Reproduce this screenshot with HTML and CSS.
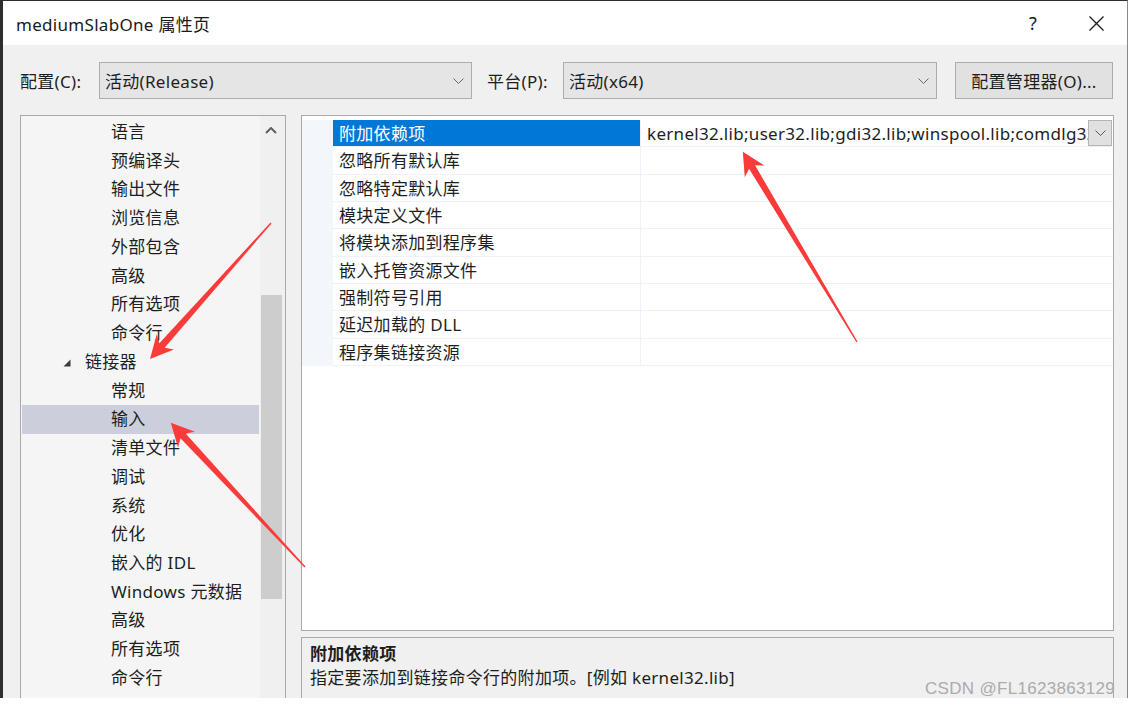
FILE: index.html
```html
<!DOCTYPE html>
<html lang="zh-CN">
<head>
<meta charset="utf-8">
<title>mediumSlabOne 属性页</title>
<link rel="stylesheet" href="styles.css">
</head>
<body>
<div class="page">
  <div class="window">
    <div class="titlebar">
      <span class="title">mediumSlabOne 属性页</span>
      <span class="tb-btn help">?</span>
      <span class="tb-btn close">
        <svg width="15" height="15" viewBox="0 0 15 15"><path d="M0.5 0.5 L14.5 14.5 M14.5 0.5 L0.5 14.5" stroke="#1a1a1a" stroke-width="1.3" fill="none"/></svg>
      </span>
    </div>
    <div class="body">
      <div class="toolbar">
        <span class="label label-cfg">配置(C):</span>
        <div class="combo combo-cfg">
          <span class="combo-text">活动(Release)</span>
          <svg class="chev" width="11" height="6" viewBox="0 0 11 6"><path d="M0.5 0.5 L5.5 5.5 L10.5 0.5" fill="none" stroke="#666" stroke-width="1"/></svg>
        </div>
        <span class="label label-plat">平台(P):</span>
        <div class="combo combo-plat">
          <span class="combo-text">活动(x64)</span>
          <svg class="chev" width="11" height="6" viewBox="0 0 11 6"><path d="M0.5 0.5 L5.5 5.5 L10.5 0.5" fill="none" stroke="#666" stroke-width="1"/></svg>
        </div>
        <div class="btn">配置管理器(O)...</div>
      </div>
      <div class="main">
        <div class="tree">
          <div class="tree-list">
            <div class="node l2">语言</div>
            <div class="node l2">预编译头</div>
            <div class="node l2">输出文件</div>
            <div class="node l2">浏览信息</div>
            <div class="node l2">外部包含</div>
            <div class="node l2">高级</div>
            <div class="node l2">所有选项</div>
            <div class="node l2">命令行</div>
            <div class="node l1"><svg class="expander" width="8" height="8" viewBox="0 0 8 8"><polygon points="7.5,0.5 7.5,7.5 0.5,7.5" fill="#3a3a3a"/></svg>链接器</div>
            <div class="node l2">常规</div>
            <div class="node l2 selected">输入</div>
            <div class="node l2">清单文件</div>
            <div class="node l2">调试</div>
            <div class="node l2">系统</div>
            <div class="node l2">优化</div>
            <div class="node l2">嵌入的 IDL</div>
            <div class="node l2">Windows 元数据</div>
            <div class="node l2">高级</div>
            <div class="node l2">所有选项</div>
            <div class="node l2">命令行</div>
            <div class="node l1"><svg class="expander" width="8" height="8" viewBox="0 0 8 8"><polygon points="1,0.5 6,4 1,7.5" fill="none" stroke="#3a3a3a"/></svg>清单工具</div>
          </div>
          <div class="vscroll">
            <div class="sb-up">
              <svg width="12" height="7" viewBox="0 0 12 7"><path d="M1 6 L6 1 L11 6" fill="none" stroke="#606060" stroke-width="2"/></svg>
            </div>
            <div class="sb-track"><div class="sb-thumb"></div></div>
          </div>
        </div>
        <div class="right">
          <div class="grid">
            <div class="prop">
              <div class="margin"></div>
              <div class="name selected">附加依赖项</div>
              <div class="value">
                <span class="val-text">kernel32.lib;user32.lib;gdi32.lib;winspool.lib;comdlg32.lib;advapi32.lib;shell32.lib;ole32.lib</span>
                <span class="dd"><svg width="11" height="6" viewBox="0 0 11 6"><path d="M0.5 0.5 L5.5 5.5 L10.5 0.5" fill="none" stroke="#555" stroke-width="1"/></svg></span>
              </div>
            </div>
            <div class="prop"><div class="margin"></div><div class="name">忽略所有默认库</div><div class="value"></div></div>
            <div class="prop"><div class="margin"></div><div class="name">忽略特定默认库</div><div class="value"></div></div>
            <div class="prop"><div class="margin"></div><div class="name">模块定义文件</div><div class="value"></div></div>
            <div class="prop"><div class="margin"></div><div class="name">将模块添加到程序集</div><div class="value"></div></div>
            <div class="prop"><div class="margin"></div><div class="name">嵌入托管资源文件</div><div class="value"></div></div>
            <div class="prop"><div class="margin"></div><div class="name">强制符号引用</div><div class="value"></div></div>
            <div class="prop"><div class="margin"></div><div class="name">延迟加载的 DLL</div><div class="value"></div></div>
            <div class="prop"><div class="margin"></div><div class="name">程序集链接资源</div><div class="value"></div></div>
          </div>
          <div class="desc">
            <div class="desc-title">附加依赖项</div>
            <div class="desc-text">指定要添加到链接命令行的附加项。[例如 kernel32.lib]</div>
          </div>
        </div>
      </div>
    </div>
  </div>
  <svg class="arrows" width="1131" height="705" viewBox="0 0 1131 705">
    <g fill="#fb3a3a">
      <polygon transform="translate(271 223) rotate(131.66)" points="0,-0.7 164,-3.5 159,-11.5 182,0 159,11.5 164,3.5 0,0.7"/>
      <polygon transform="translate(305 567) rotate(-132.94)" points="0,-0.7 179,-3.5 174,-11.5 197,0 174,11.5 179,3.5 0,0.7"/>
      <polygon transform="translate(857 342) rotate(-120.96)" points="0,-0.7 204,-3.5 199,-11.5 222,0 199,11.5 204,3.5 0,0.7"/>
    </g>
  </svg>
  <div class="watermark">CSDN @FL1623863129</div>
</div>
</body>
</html>
```
FILE: styles.css
```css
* { box-sizing: border-box; }

html, body {
  margin: 0;
  padding: 0;
  background: #ffffff;
}

body {
  font-family: "Noto Sans", "Noto Sans CJK SC", sans-serif;
  font-size: 17px;
  letter-spacing: 0.3px;
  color: #1e1e1e;
}

.page {
  position: relative;
  width: 1131px;
  height: 705px;
  overflow: hidden;
}

.window {
  width: 1128px;
  height: 698px;
  border-left: 3px solid #2e2e2e;
  border-top: 1px solid #2e2e2e;
  border-right: 1px solid #8a8a8a;
  display: flex;
  flex-direction: column;
  overflow: hidden;
}

/* title bar */
.titlebar {
  flex: none;
  height: 44px;
  background: #ffffff;
  display: flex;
  align-items: center;
  padding-left: 13px;
}

.title {
  flex: 1;
  color: #1a1a1a;
}

.tb-btn {
  height: 44px;
  display: flex;
  align-items: center;
  justify-content: center;
}

.help {
  width: 64px;
  font-size: 18px;
  color: #1a1a1a;
}

.close {
  width: 62px;
}

/* body */
.body {
  flex: 1;
  min-height: 0;
  background: #f0f0f0;
  padding: 17px 13px 0 17px;
  display: flex;
  flex-direction: column;
}

.toolbar {
  flex: none;
  height: 37px;
  display: flex;
  align-items: stretch;
}

.label {
  display: flex;
  align-items: center;
  white-space: nowrap;
}

.label-cfg { width: 79px; }
.label-plat { width: 76px; margin-left: 15px; }

.combo {
  display: flex;
  align-items: center;
  background: #e5e5e5;
  border: 1px solid #adadad;
  padding: 0 7px 0 5px;
}

.combo-cfg { width: 373px; }
.combo-plat { width: 374px; }

.combo-text { flex: 1; }

.chev { flex: none; }

.btn {
  width: 158px;
  margin-left: 18px;
  background: #e1e1e1;
  border: 1px solid #adadad;
  display: flex;
  align-items: center;
  justify-content: center;
  white-space: nowrap;
}

.main {
  flex: 1;
  min-height: 0;
  margin-top: 16px;
  display: flex;
  gap: 15px;
}

/* tree */
.tree {
  width: 266px;
  flex: none;
  border: 1px solid #a9a9a9;
  background: #f5f5f5;
  display: flex;
  overflow: hidden;
  height: 600px;
}

.tree-list {
  width: 239px;
  flex: none;
  padding-top: 2px;
}

.node {
  height: 28.74px;
  line-height: 28.74px;
  white-space: nowrap;
  margin: 0 1px;
  display: flex;
  align-items: center;
}

.l2 { padding-left: 89px; }
.l1 { padding-left: 41px; }

.expander {
  margin-right: 14px;
  margin-top: 2px;
}

.node.selected {
  background: #cccedb;
}

.vscroll {
  width: 25px;
  flex: none;
  background: #f0f0f0;
  display: flex;
  flex-direction: column;
}

.sb-up {
  height: 28px;
  display: flex;
  align-items: center;
  justify-content: center;
  padding-right: 3px;
}

.sb-track {
  flex: 1;
  padding-top: 151px;
}

.sb-thumb {
  width: 21px;
  margin-left: 1px;
  height: 304px;
  background: #cdcdcd;
}

/* right side */
.right {
  width: 813px;
  flex: none;
  display: flex;
  flex-direction: column;
  gap: 6px;
}

.grid {
  flex: none;
  height: 516px;
  border: 1px solid #a9a9a9;
  background: #ffffff;
  padding-top: 4px;
}

.prop {
  display: flex;
  height: 27.33px;
}

.margin {
  width: 31px;
  flex: none;
  background: #f3f6fb;
}

.name {
  width: 308px;
  flex: none;
  padding-left: 6px;
  border-right: 1px solid #eef1f8;
  border-bottom: 1px solid #eef1f8;
  line-height: 28px;
  white-space: nowrap;
}

.name.selected {
  background: #0078d7;
  color: #ffffff;
}

.value {
  flex: 1;
  min-width: 0;
  display: flex;
  border-bottom: 1px solid #eef1f8;
  line-height: 28px;
}

.val-text {
  flex: 1;
  min-width: 0;
  overflow: hidden;
  white-space: nowrap;
  padding-left: 6px;
}

.dd {
  flex: none;
  width: 24px;
  margin-right: 1px;
  background: #e1e1e1;
  border: 1px solid #b4b4b4;
  display: flex;
  align-items: center;
  justify-content: center;
}

.desc {
  flex: 1;
  border: 1px solid #a9a9a9;
  border-bottom: none;
  background: #f0f0f0;
  padding: 4px 8px 0 8px;
  line-height: 24px;
}

.desc-title {
  font-weight: bold;
}

/* overlays */
.arrows {
  position: absolute;
  left: 0;
  top: 0;
  pointer-events: none;
}

.watermark {
  position: absolute;
  left: 925px;
  top: 679px;
  font-family: "Liberation Sans", sans-serif;
  font-size: 17px;
  line-height: 20px;
  color: #ababab;
  white-space: nowrap;
}
```
